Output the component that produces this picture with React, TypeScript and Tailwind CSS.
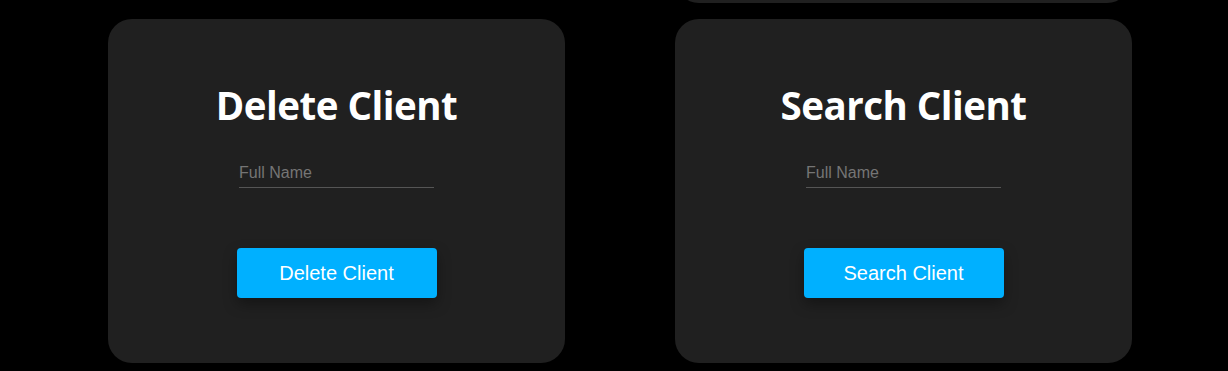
import React from 'react';

function ClientCard({ title }: { title: string }) {
  return (
    <div className="w-[457px] h-[344px] bg-[#202020] rounded-[24px] flex flex-col items-center pt-[67px]">
      <h2 className="text-white font-bold text-[38.5px] leading-none font-['Open_Sans',sans-serif] tracking-[-0.5px]">
        {title}
      </h2>
      <input
        type="text"
        placeholder="Full Name"
        className="mt-[38px] w-[195px] bg-transparent border-0 border-b border-[#555555] text-white text-[16px] leading-[20px] pb-[4px] outline-none placeholder:text-[#757575] font-['Liberation_Sans',Arial,sans-serif]"
      />
      <button
        type="button"
        className="mt-[60px] w-[200px] h-[50px] bg-[#00b0ff] rounded-[4px] text-white text-[20px] font-['Liberation_Sans',Arial,sans-serif] shadow-[0_6px_14px_rgba(0,0,0,0.35)]"
      >
        {title}
      </button>
    </div>
  );
}

export default function App() {
  return (
    <div className="w-[1228px] h-[371px] bg-black overflow-hidden">
      <div className="mt-[-341px] pl-[108px] grid grid-cols-[457px_456px] gap-x-[110px] gap-y-[16px]">
        <div />
        <div className="w-[456px] h-[344px] bg-[#202020] rounded-[24px]" />
        <ClientCard title="Delete Client" />
        <ClientCard title="Search Client" />
      </div>
    </div>
  );
}
